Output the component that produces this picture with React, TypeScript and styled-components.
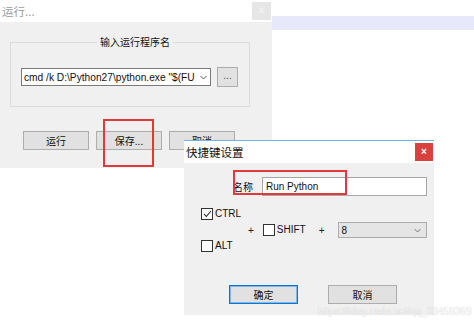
import styled, { createGlobalStyle } from "styled-components";

const GlobalStyle = createGlobalStyle`
  body {
    margin: 0;
    background: #ffffff;
    font-family: "Liberation Sans", "Noto Sans CJK SC", sans-serif;
  }
`;

const Desktop = styled.div`
  position: relative;
  width: 474px;
  height: 323px;
  overflow: hidden;
  background: #ffffff;
`;

const Win = styled.div<{ $left: number; $top: number; $width: number; $height: number; $accent?: boolean }>`
  position: absolute;
  left: ${(p) => p.$left}px;
  top: ${(p) => p.$top}px;
  width: ${(p) => p.$width}px;
  height: ${(p) => p.$height}px;
  display: flex;
  flex-direction: column;
  border-top: ${(p) => (p.$accent ? "1px solid #74b2e2" : "none")};
  box-sizing: border-box;
`;

const TitleBar = styled.div<{ $h: number }>`
  height: ${(p) => p.$h}px;
  flex: none;
  background: #ffffff;
  display: flex;
  align-items: center;
  justify-content: space-between;
  padding: 0 1px 0 2px;
`;

const TitleText = styled.span<{ $inactive?: boolean }>`
  font-family: "Noto Sans CJK SC", sans-serif;
  font-size: 11.5px;
  line-height: 14px;
  color: ${(p) => (p.$inactive ? "#9a9a9a" : "#111111")};
`;

const CloseBtn = styled.div<{ $active?: boolean }>`
  width: ${(p) => (p.$active ? 18 : 19)}px;
  height: 18px;
  background: ${(p) => (p.$active ? "#d9413f" : "#e6e6e6")};
  display: flex;
  align-items: center;
  justify-content: center;
  color: ${(p) => (p.$active ? "#ffffff" : "#f3f3f3")};
  font-family: "Liberation Sans", sans-serif;
  font-size: 10px;
  font-weight: bold;
  line-height: 1;
`;

const Body = styled.div`
  flex: 1;
  background: #f0f0f0;
  display: flex;
  flex-direction: column;
`;

const RunBody = styled(Body)`
  padding: 14px 0 0 10px;
`;

const GroupBox = styled.fieldset`
  width: 240px;
  min-width: 0;
  box-sizing: border-box;
  margin: 0;
  padding: 19px 0 19px 10px;
  border: 1px solid #dcdcdc;
`;

const Legend = styled.legend`
  margin: 0 auto;
  padding: 0 3px;
  font-family: "Noto Sans CJK SC", sans-serif;
  font-size: 10px;
  line-height: 12px;
  color: #111;
`;

const ComboRow = styled.div`
  display: flex;
  align-items: center;
  gap: 6px;
  height: 20px;
`;

const Combo = styled.div`
  width: 190px;
  height: 18px;
  box-sizing: border-box;
  background: #ffffff;
  border: 1px solid #7a7a7a;
  display: flex;
  align-items: center;
  justify-content: space-between;
  padding: 0 3px 0 2px;
  font-size: 10.2px;
  color: #111;
`;

const ComboText = styled.span`
  white-space: nowrap;
`;

const WinButton = styled.div<{ $w: number; $h?: number; $default?: boolean }>`
  width: ${(p) => p.$w}px;
  height: ${(p) => p.$h ?? 19}px;
  box-sizing: border-box;
  background: #e1e1e1;
  border: 1px solid ${(p) => (p.$default ? "#0078d7" : "#adadad")};
  box-shadow: ${(p) => (p.$default ? "inset 0 0 0 1px #7fb6e4" : "none")};
  display: flex;
  align-items: center;
  justify-content: center;
  font-family: "Noto Sans CJK SC", sans-serif;
  font-size: 10px;
  color: #111;
`;

const Dots = styled(WinButton)`
  font-family: "Liberation Sans", sans-serif;
  color: #555;
  padding-bottom: 3px;
`;

const ButtonRow = styled.div<{ $top: number; $left: number; $gap: number }>`
  display: flex;
  gap: ${(p) => p.$gap}px;
  margin: ${(p) => p.$top}px 0 0 ${(p) => p.$left}px;
`;

const NameRow = styled.div`
  display: flex;
  align-items: center;
  gap: 9px;
  margin: 14px 0 0 49px;
`;

const Label = styled.span`
  font-family: "Noto Sans CJK SC", sans-serif;
  font-size: 10px;
  color: #111;
`;

const TextInput = styled.div`
  width: 165px;
  height: 19px;
  box-sizing: border-box;
  background: #ffffff;
  border: 1px solid #a6a6a6;
  padding-left: 3px;
  display: flex;
  align-items: center;
  font-size: 10px;
  color: #111;
`;

const KeyRow = styled.div`
  display: flex;
  align-items: center;
  margin: 12px 0 0 17px;
`;

const ModColumn = styled.div`
  width: 44px;
  display: flex;
  flex-direction: column;
  gap: 20px;
`;

const Check = styled.label<{ $ml?: number }>`
  display: flex;
  align-items: center;
  gap: 2px;
  margin-left: ${(p) => p.$ml ?? 0}px;
  font-size: 10px;
  line-height: 12px;
  color: #111;
`;

const Box = styled.span`
  width: 12px;
  height: 12px;
  box-sizing: border-box;
  border: 1px solid #333;
  background: #fff;
  display: flex;
  align-items: center;
  justify-content: center;
`;

const Plus = styled.span<{ $ml: number }>`
  margin-left: ${(p) => p.$ml}px;
  font-size: 10px;
  color: #222;
`;

const Select = styled.div`
  width: 89px;
  height: 16px;
  margin-left: 13px;
  box-sizing: border-box;
  background: #e5e5e5;
  border: 1px solid #acacac;
  display: flex;
  align-items: center;
  justify-content: space-between;
  padding: 0 5px 0 3px;
  font-size: 10px;
  color: #111;
`;

const Lavender = styled.div`
  position: absolute;
  left: 272px;
  top: 16px;
  width: 202px;
  height: 14px;
  background: #e8e8fb;
`;

const Highlight = styled.div<{ $left: number; $top: number; $width: number; $height: number }>`
  position: absolute;
  left: ${(p) => p.$left}px;
  top: ${(p) => p.$top}px;
  width: ${(p) => p.$width}px;
  height: ${(p) => p.$height}px;
  box-sizing: border-box;
  border: 2px solid #e2393c;
  pointer-events: none;
`;

const Watermark = styled.div`
  position: absolute;
  left: 318px;
  top: 306px;
  font-size: 10px;
  color: rgba(255, 255, 255, 0.9);
  text-shadow: 0 0 1px rgba(0, 0, 0, 0.25);
  white-space: nowrap;
`;

const Chevron = ({ color = "#555" }: { color?: string }) => (
  <svg width="7" height="5" viewBox="0 0 7 5">
    <polyline points="0.5,1 3.5,4 6.5,1" fill="none" stroke={color} strokeWidth="1" />
  </svg>
);

const Tick = () => (
  <svg width="9" height="8" viewBox="0 0 9 8">
    <polyline points="1,4 3.3,6.5 8,1" fill="none" stroke="#222" strokeWidth="1.1" />
  </svg>
);

export default function App() {
  return (
    <>
      <GlobalStyle />
      <Desktop>
        <Lavender />
        <Win $left={0} $top={0} $width={272} $height={168}>
          <TitleBar $h={22}>
            <TitleText $inactive>运行...</TitleText>
            <CloseBtn>×</CloseBtn>
          </TitleBar>
          <RunBody>
            <GroupBox>
              <Legend>输入运行程序名</Legend>
              <ComboRow>
                <Combo>
                  <ComboText>cmd /k D:\Python27\python.exe "$(FU</ComboText>
                  <Chevron />
                </Combo>
                <Dots $w={21} $h={20}>...</Dots>
              </ComboRow>
            </GroupBox>
            <ButtonRow $top={24} $left={13} $gap={7}>
              <WinButton $w={66}>运行</WinButton>
              <WinButton $w={66}>保存...</WinButton>
              <WinButton $w={66}>取消</WinButton>
            </ButtonRow>
          </RunBody>
        </Win>
        <Highlight $left={103} $top={119} $width={51} $height={48} />

        <Win $left={184} $top={140} $width={250} $height={175} $accent>
          <TitleBar $h={22}>
            <TitleText>快捷键设置</TitleText>
            <CloseBtn $active>×</CloseBtn>
          </TitleBar>
          <Body>
            <NameRow>
              <Label>名称</Label>
              <TextInput>Run Python</TextInput>
            </NameRow>
            <KeyRow>
              <ModColumn>
                <Check>
                  <Box>
                    <Tick />
                  </Box>
                  CTRL
                </Check>
                <Check>
                  <Box />
                  ALT
                </Check>
              </ModColumn>
              <Plus $ml={3}>+</Plus>
              <Check $ml={9}>
                <Box />
                SHIFT
              </Check>
              <Plus $ml={13}>+</Plus>
              <Select>
                <span>8</span>
                <Chevron color="#777" />
              </Select>
            </KeyRow>
            <ButtonRow $top={33} $left={45} $gap={30}>
              <WinButton $w={69} $default>确定</WinButton>
              <WinButton $w={69}>取消</WinButton>
            </ButtonRow>
          </Body>
        </Win>
        <Highlight $left={233} $top={170} $width={114} $height={25} />
        <Watermark>https://blog.csdn.net/qq_33459369</Watermark>
      </Desktop>
    </>
  );
}
